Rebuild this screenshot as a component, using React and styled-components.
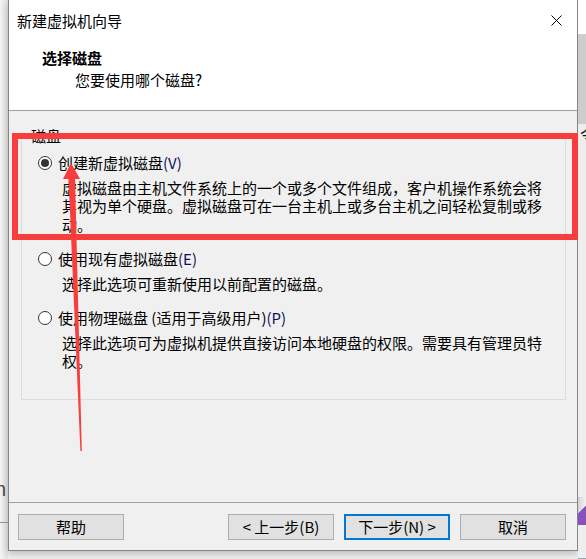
import React from "react";
import styled, { createGlobalStyle } from "styled-components";

const Global = createGlobalStyle`
  html, body { margin: 0; padding: 0; }
  body {
    font-family: "Noto Sans CJK SC", "Microsoft YaHei", sans-serif;
    font-size: 15px;
    color: #000;
  }
  * { box-sizing: border-box; }
`;

const FONT = `"Noto Sans CJK SC", "Noto Sans", sans-serif`;

const Page = styled.div`
  position: relative;
  width: 586px;
  height: 559px;
  overflow: hidden;
  display: flex;
  align-items: flex-start;
  background: #efefef;
  font-family: ${FONT};
`;

const LeftStrip = styled.div`
  width: 8px;
  height: 559px;
  flex: none;
  display: flex;
  flex-direction: column;
  background: linear-gradient(to right, #f4f4f4, #e4e4e4);
`;

const StripFill = styled.div`
  height: ${(p) => p.$h}px;
  flex: ${(p) => (p.$h ? "none" : "1")};
  background: ${(p) => p.$bg || "transparent"};
  border-bottom: ${(p) => (p.$line ? `1px solid ${p.$line}` : "none")};
  overflow: hidden;
  position: relative;
`;

const StripGlyph = styled.span`
  display: block;
  font-family: "Liberation Sans", "Noto Sans", sans-serif;
  font-size: 20px;
  line-height: 20px;
  color: #4a4a4a;
  margin-left: ${(p) => p.$ml}px;
  margin-top: ${(p) => p.$mt}px;
`;

const RightStrip = styled.div`
  width: 8px;
  height: 559px;
  flex: none;
  display: flex;
  flex-direction: column;
`;

const CjkGlyph = styled.span`
  display: block;
  font-size: 16px;
  line-height: 18px;
  color: #111;
  margin-left: 2px;
  margin-top: ${(p) => p.$mt}px;
`;

const Purple = styled.div`
  height: 28px;
  flex: none;
  background: linear-gradient(135deg, transparent 45%, #8a4fc0 46%);
`;

const Dialog = styled.div`
  width: 570px;
  height: 551px;
  flex: none;
  display: flex;
  flex-direction: column;
  border: 1px solid #858585;
  border-top: none;
  background: #f0f0f0;
  box-shadow: 0 2px 8px rgba(0, 0, 0, 0.25);
`;

const TitleBar = styled.div`
  height: 40px;
  flex: none;
  background: #fff;
  display: flex;
  align-items: center;
  justify-content: space-between;
  padding: 0 15px 0 8px;
  font-size: 15px;
  line-height: 19px;
`;

const CloseIcon = styled.svg`
  width: 11px;
  height: 11px;
  display: block;
`;

const Header = styled.div`
  height: 71px;
  flex: none;
  background: #fff;
  border-bottom: 1px solid #a0a0a0;
  padding: 8px 0 0 33px;
`;

const HeaderTitle = styled.div`
  font-weight: 700;
  font-size: 15px;
  line-height: 19px;
`;

const HeaderSub = styled.div`
  font-size: 15px;
  line-height: 19px;
  margin: 3px 0 0 33px;
`;

const Body = styled.div`
  flex: 1;
  background: #f0f0f0;
  padding: 14.5px 11px 0 12px;
`;

const GroupBox = styled.fieldset`
  margin: 0;
  border: 1px solid #dcdcdc;
  padding: 8px 10px 28.5px 7px;
  min-inline-size: 0;
`;

const GroupLegend = styled.legend`
  padding: 0 2px;
  font-size: 15px;
  line-height: 19px;
`;

const Options = styled.div`
  display: flex;
  flex-direction: column;
  gap: 14.5px;
  padding-left: 9px;
`;

const Option = styled.div`
  display: flex;
  flex-direction: column;
`;

const RadioRow = styled.label`
  display: flex;
  align-items: center;
  height: 20px;
  gap: 6px;
  font-size: 15px;
  line-height: 20px;
`;

const RadioCircle = styled.span`
  width: 14px;
  height: 14px;
  flex: none;
  border-radius: 50%;
  border: 1px solid #333;
  background: #fff;
  display: flex;
  align-items: center;
  justify-content: center;
  &::after {
    content: "";
    width: 8px;
    height: 8px;
    border-radius: 50%;
    background: ${(p) => (p.$checked ? "#333" : "transparent")};
  }
`;

const Accel = styled.span`
  color: #10105a;
`;

const Desc = styled.div`
  margin: 6px 0 0 24px;
  width: 488px;
  font-size: 15px;
  line-height: 18.5px;
`;

const Footer = styled.div`
  height: 48px;
  flex: none;
  border-top: 1px solid #a0a0a0;
  display: flex;
  align-items: flex-start;
  padding: 11px 11px 0 9px;
  gap: 10px;
`;

const Spacer = styled.div`
  flex: 1;
`;

const Button = styled.button`
  width: 106px;
  height: 26px;
  flex: none;
  padding: 0;
  background: #e1e1e1;
  border: ${(p) => (p.$primary ? "2px solid #0078d7" : "1px solid #adadad")};
  font-family: ${FONT};
  font-size: 15px;
  line-height: 20px;
  color: #000;
  display: flex;
  align-items: center;
  justify-content: center;
  white-space: pre;
`;

const RedBox = styled.div`
  position: absolute;
  left: 12px;
  top: 133px;
  width: 566px;
  height: 107px;
  border: 6px solid #f93d3d;
  pointer-events: none;
`;

const ArrowSvg = styled.svg`
  position: absolute;
  left: 0;
  top: 0;
  width: 586px;
  height: 559px;
  pointer-events: none;
`;

const options = [
  {
    label: "创建新虚拟磁盘",
    key: "V",
    checked: true,
    desc:
      "虚拟磁盘由主机文件系统上的一个或多个文件组成，客户机操作系统会将其视为单个硬盘。虚拟磁盘可在一台主机上或多台主机之间轻松复制或移动。",
  },
  {
    label: "使用现有虚拟磁盘",
    key: "E",
    checked: false,
    desc: "选择此选项可重新使用以前配置的磁盘。",
  },
  {
    label: "使用物理磁盘 (适用于高级用户)",
    key: "P",
    checked: false,
    desc: "选择此选项可为虚拟机提供直接访问本地硬盘的权限。需要具有管理员特权。",
  },
];

export default function App() {
  return (
    <>
      <Global />
      <Page>
        <LeftStrip>
          <StripFill $h={476} />
          <StripFill $h={47} $line="#7f97a8">
            <StripGlyph $ml={-5} $mt={3}>n</StripGlyph>
          </StripFill>
          <StripFill />
        </LeftStrip>

        <Dialog>
          <TitleBar>
            <span>新建虚拟机向导</span>
            <CloseIcon viewBox="0 0 11 11">
              <path d="M0.5 0.5 L10.5 10.5 M10.5 0.5 L0.5 10.5" stroke="#000" strokeWidth="1" fill="none" />
            </CloseIcon>
          </TitleBar>
          <Header>
            <HeaderTitle>选择磁盘</HeaderTitle>
            <HeaderSub>您要使用哪个磁盘?</HeaderSub>
          </Header>
          <Body>
            <GroupBox>
              <GroupLegend>磁盘</GroupLegend>
              <Options>
                {options.map((o) => (
                  <Option key={o.key}>
                    <RadioRow>
                      <RadioCircle $checked={o.checked} />
                      <span>
                        {o.label}
                        <Accel>({o.key})</Accel>
                      </span>
                    </RadioRow>
                    <Desc>{o.desc}</Desc>
                  </Option>
                ))}
              </Options>
            </GroupBox>
          </Body>
          <Footer>
            <Button>帮助</Button>
            <Spacer />
            <Button>{"< 上一步(B)"}</Button>
            <Button $primary>{"下一步(N) >"}</Button>
            <Button>取消</Button>
          </Footer>
        </Dialog>

        <RightStrip>
          <StripFill $h={34} $bg="#ffffff" />
          <StripFill $h={90} $bg="#cdcdcd" />
          <StripFill $h={373} $bg="#eeeeee">
            <CjkGlyph $mt={1}>令</CjkGlyph>
          </StripFill>
          <Purple />
          <StripFill $bg="#eeeeee" $line="#9aa6b0" />
        </RightStrip>

        <RedBox />
        <ArrowSvg viewBox="0 0 586 559">
          <polygon points="71,163 63,179 80,179" fill="#f93d3d" />
          <polygon points="68.5,178 75,178 81.8,451 80.4,451" fill="#f93d3d" />
        </ArrowSvg>
      </Page>
    </>
  );
}
